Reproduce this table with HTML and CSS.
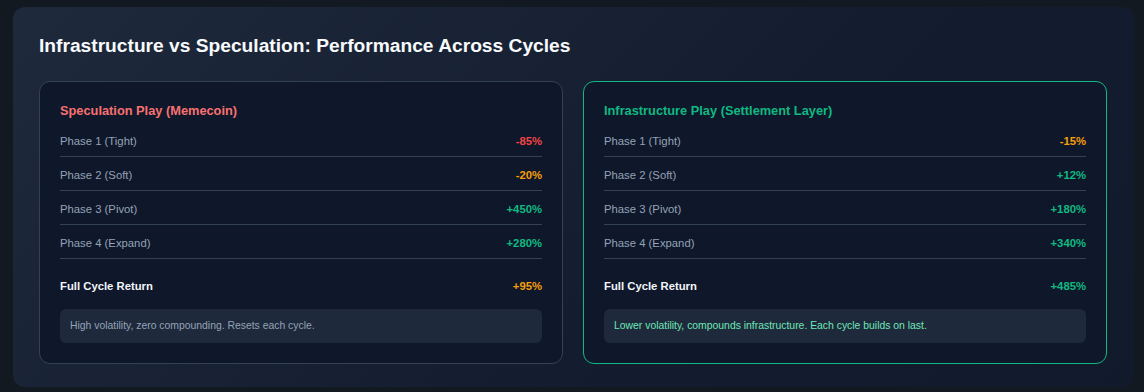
FILE: index.html
```html
<!DOCTYPE html>
<html lang="en">
<head>
<meta charset="utf-8">
<title>Infrastructure vs Speculation</title>
<link rel="stylesheet" href="styles.css">
</head>
<body>
<section class="panel">
  <h2 class="panel-title">Infrastructure vs Speculation: Performance Across Cycles</h2>
  <div class="grid">
    <div class="card card-spec">
      <h3 class="card-title title-red">Speculation Play (Memecoin)</h3>
      <div class="row"><span class="label">Phase 1 (Tight)</span><span class="val red">-85%</span></div>
      <div class="row"><span class="label">Phase 2 (Soft)</span><span class="val orange">-20%</span></div>
      <div class="row"><span class="label">Phase 3 (Pivot)</span><span class="val green">+450%</span></div>
      <div class="row"><span class="label">Phase 4 (Expand)</span><span class="val green">+280%</span></div>
      <div class="total"><span class="total-label">Full Cycle Return</span><span class="val orange">+95%</span></div>
      <div class="note note-gray">High volatility, zero compounding. Resets each cycle.</div>
    </div>
    <div class="card card-infra">
      <h3 class="card-title title-green">Infrastructure Play (Settlement Layer)</h3>
      <div class="row"><span class="label">Phase 1 (Tight)</span><span class="val orange">-15%</span></div>
      <div class="row"><span class="label">Phase 2 (Soft)</span><span class="val green">+12%</span></div>
      <div class="row"><span class="label">Phase 3 (Pivot)</span><span class="val green">+180%</span></div>
      <div class="row"><span class="label">Phase 4 (Expand)</span><span class="val green">+340%</span></div>
      <div class="total"><span class="total-label">Full Cycle Return</span><span class="val green">+485%</span></div>
      <div class="note note-green">Lower volatility, compounds infrastructure. Each cycle builds on last.</div>
    </div>
  </div>
</section>
</body>
</html>
```
FILE: styles.css
```css
* { box-sizing: border-box; }
html, body { margin: 0; padding: 0; }
body {
  background: #131921;
  font-family: "Liberation Sans", Arial, sans-serif;
  width: 1144px;
  height: 392px;
  overflow: hidden;
}
.panel {
  margin: 7px 10px 0 13px;
  width: 1121px;
  height: 380px;
  border-radius: 12px;
  background: linear-gradient(135deg, #1e293b 0%, #141d30 60%, #111a2b 100%);
  padding: 28px 27px 25px 26px;
}
.panel-title {
  margin: 0 0 24px;
  font-size: 19.2px;
  line-height: 22px;
  font-weight: 700;
  color: #f8fafc;
}
.grid {
  display: grid;
  grid-template-columns: 1fr 1fr;
  gap: 20px;
}
.card {
  background: #0f172a;
  border: 1px solid #334155;
  border-radius: 11px;
  padding: 21px 20px 20px;
}
.card-infra { border-color: #10b981; }
.card-title {
  margin: 0 0 5px;
  font-size: 12.8px;
  line-height: 15px;
  font-weight: 700;
}
.title-red { color: #f87171; }
.title-green { color: #10b981; }
.row {
  display: flex;
  justify-content: space-between;
  padding: 12px 0 8px;
  line-height: 13px;
  font-size: 11.3px;
  border-bottom: 1px solid #334155;
}
.label { color: #94a3b8; }
.val { font-weight: 700; }
.red { color: #ef4444; }
.orange { color: #f59e0b; }
.green { color: #10b981; }
.total {
  display: flex;
  justify-content: space-between;
  margin-top: 10px;
  padding: 11px 0 9px;
  font-size: 11.3px;
  line-height: 13px;
}
.total-label { color: #f1f5f9; font-weight: 700; }
.note {
  margin-top: 7px;
  background: #1e293b;
  border-radius: 6px;
  padding: 10px;
  font-size: 10.4px;
  line-height: 14px;
}
.note-gray { color: #94a3b8; }
.note-green { color: #6ee7b7; }
```
